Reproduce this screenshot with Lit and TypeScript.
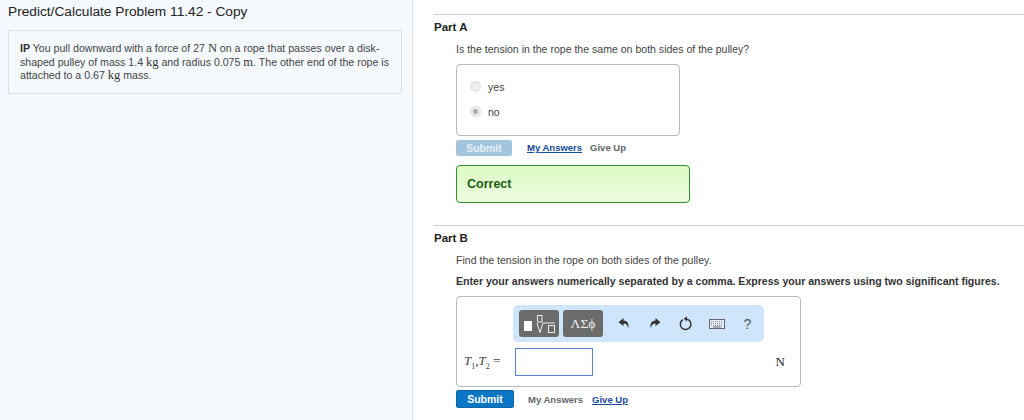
import { LitElement, html, css } from "lit";
import { customElement } from "lit/decorators.js";

@customElement("app-root")
export class AppRoot extends LitElement {
  static styles = css`
    :host { display: flex; width: 1024px; height: 420px; overflow: hidden; background: #fff; font-family: "Liberation Sans", Arial, sans-serif; color: #444; font-size: 10.55px; }
    .left { width: 413px; height: 420px; box-sizing: border-box; background: #f5f9fe; border-right: 1px solid #dfe6ee; padding: 3px 10px 0 8px; flex: none; }
    .title { font-size: 13.7px; line-height: 17px; color: #222; }
    .intro { margin-top: 10px; border: 1px solid #d3dfeb; height: 64px; box-sizing: border-box; padding: 11px 11px; line-height: 13.7px; font-size: 10.6px; color: #444; white-space: nowrap; }
    .intro b { color: #333; }
    .m { font-family: "Liberation Serif", serif; font-size: 12.5px; color: #333; }
    .right { flex: 1; padding: 14px 0 0 21px; min-width: 0; }
    .part { border-top: 1px solid #ccc; }
    .part h2 { margin: 0; padding-top: 5px; font-size: 11.5px; line-height: 14px; font-weight: bold; color: #222; }
    .body { margin-left: 22px; }
    .q { margin-top: 8px; line-height: 14px; }
    .choices { margin-top: 8px; width: 224px; height: 72px; box-sizing: border-box; border: 1px solid #bbb; border-radius: 4px; background: #fff; padding: 9px 0 0 13px; }
    .choice { display: flex; align-items: center; height: 25px; gap: 7px; }
    .radio { width: 9px; height: 9px; border-radius: 50%; border: 1px solid #dedede; background: #ececec; display: flex; align-items: center; justify-content: center; flex: none; }
    .radio i { width: 5px; height: 5px; border-radius: 50%; background: #aaa; }
    .actions { display: flex; align-items: center; height: 17px; font-size: 9.5px; font-weight: bold; }
    .a1 { margin-top: 3px; }
    .btn { width: 56px; height: 16px; border-radius: 2px; color: #fff; display: flex; align-items: center; justify-content: center; font-size: 10.5px; font-weight: bold; box-sizing: border-box; }
    .btn.off { background: #a3c4de; color: #e6f0f7; }
    .btn.on { background: #0b76c4; border: 1px solid #0a66ab; width: 58px; height: 18px; }
    .link { color: #1a4a9c; text-decoration: underline; }
    .muted { color: #666; }
    .a1 .first { margin-left: 15px; }
    .a1 .second { margin-left: 8px; }
    .correct { margin-top: 9px; width: 234px; height: 38px; box-sizing: border-box; border: 1px solid #2f8f2f; border-radius: 4px; background: linear-gradient(#dcfac4, #ecfce0); color: #1a5e0f; font-weight: bold; font-size: 12.5px; display: flex; align-items: center; padding-left: 10px; }
    .partb { margin-top: 22px; }
    .bold { margin-top: 7px; font-weight: bold; color: #333; line-height: 14px; font-size: 10.57px; }
    .answer { margin-top: 8px; width: 345px; height: 91px; box-sizing: border-box; border: 1px solid #bbb; border-radius: 4px; display: flex; flex-direction: column; background: #fff; }
    .toolbar { margin: 8px 0 0 56px; width: 251px; height: 37px; box-sizing: border-box; border-radius: 5px; background: #cfe5fb; display: flex; align-items: center; padding-left: 6px; }
    .tbtn { height: 27px; width: 40px; border-radius: 3px; background: #6b6b6b; color: #f2f2f2; display: flex; align-items: center; justify-content: center; box-sizing: border-box; margin-right: 4px; font-family: "Liberation Serif", serif; font-size: 13.5px; }
    .icons { display: flex; align-items: center; margin-left: 1px; }
    .icon { width: 31px; display: flex; justify-content: center; align-items: center; color: #333; }
    .q-mark { font-size: 14px; color: #555; font-family: "Liberation Sans", sans-serif; }
    .row { display: flex; align-items: center; margin-top: 6px; height: 28px; padding-left: 7px; }
    .label { font-family: "Liberation Serif", serif; font-style: italic; font-size: 13px; color: #444; width: 51px; white-space: nowrap; }
    .label sub { font-size: 8px; font-style: normal; }
    .label span { font-style: normal; }
    .input { width: 78px; height: 28px; box-sizing: border-box; border: 1px solid #5b86cf; box-shadow: inset 0 0 1px #b8cdf0; }
    .unit { margin-left: auto; margin-right: 15px; font-family: "Liberation Serif", serif; font-size: 13px; color: #222; }
    .a2 { margin-top: 3px; height: 18px; }
    .a2 .first { margin-left: 14px; }
    .a2 .second { margin-left: 9px; }
  `;

  render() {
    return html`
      <div class="left">
        <div class="title">Predict/Calculate Problem 11.42 - Copy</div>
        <div class="intro"><b>IP</b> You pull downward with a force of 27 <span class="m">N</span> on a rope that passes over a disk-<br />shaped pulley of mass 1.4 <span class="m">kg</span> and radius 0.075 <span class="m">m</span>. The other end of the rope is<br />attached to a 0.67 <span class="m">kg</span> mass.</div>
      </div>
      <div class="right">
        <section class="part">
          <h2>Part A</h2>
          <div class="body">
            <div class="q">Is the tension in the rope the same on both sides of the pulley?</div>
            <div class="choices">
              <div class="choice"><span class="radio"></span><span>yes</span></div>
              <div class="choice"><span class="radio"><i></i></span><span>no</span></div>
            </div>
            <div class="actions a1">
              <span class="btn off">Submit</span>
              <span class="link first">My Answers</span>
              <span class="muted second">Give Up</span>
            </div>
            <div class="correct">Correct</div>
          </div>
        </section>
        <section class="part partb">
          <h2>Part B</h2>
          <div class="body">
            <div class="q">Find the tension in the rope on both sides of the pulley.</div>
            <div class="bold">Enter your answers numerically separated by a comma. Express your answers using two significant figures.</div>
            <div class="answer">
              <div class="toolbar">
                <span class="tbtn">
                  <svg width="40" height="27" viewBox="0 0 40 27">
                    <rect x="5" y="11" width="8" height="10" fill="#fff"></rect>
                    <rect x="18.5" y="5.5" width="4.5" height="6.5" fill="none" stroke="#eee"></rect>
                    <path d="M18 13l3 9.5 3-9.5h12" fill="none" stroke="#eee"></path>
                    <rect x="29.5" y="15.5" width="6" height="7" fill="none" stroke="#eee"></rect>
                  </svg>
                </span>
                <span class="tbtn">ΛΣϕ</span>
                <div class="icons">
                  <span class="icon"><svg width="12" height="13" viewBox="0 0 12 13"><path d="M5.5 1L0.5 5.2 5.5 9V6.6c2.6 0 4 1 4.6 5 1.2-4.6-.4-7.8-4.6-8z" fill="#333"></path></svg></span>
                  <span class="icon"><svg width="12" height="13" viewBox="0 0 12 13"><path d="M6.5 1L11.5 5.2 6.5 9V6.6c-2.6 0-4 1-4.6 5-1.2-4.6.4-7.8 4.6-8z" fill="#333"></path></svg></span>
                  <span class="icon"><svg width="14" height="15" viewBox="0 0 14 15"><path d="M4 3.6a5.3 5.3 0 1 0 4-.5" fill="none" stroke="#333" stroke-width="1.5"></path><path d="M8 0.3v5.2L4.8 2.8z" fill="#333"></path></svg></span>
                  <span class="icon"><svg width="16" height="10" viewBox="0 0 16 10"><rect x="0.5" y="0.5" width="15" height="9" fill="#e6eef5" stroke="#667"></rect><path d="M2 2.5h12M2 4.5h12M2 6.5h12" stroke="#889" stroke-dasharray="1 1"></path><path d="M4 8h8" stroke="#667"></path></svg></span>
                  <span class="icon q-mark">?</span>
                </div>
              </div>
              <div class="row">
                <span class="label">T<sub>1</sub>,T<sub>2</sub><span> =</span></span>
                <span class="input"></span>
                <span class="unit">N</span>
              </div>
            </div>
            <div class="actions a2">
              <span class="btn on">Submit</span>
              <span class="muted first">My Answers</span>
              <span class="link second">Give Up</span>
            </div>
          </div>
        </section>
      </div>
    `;
  }
}
